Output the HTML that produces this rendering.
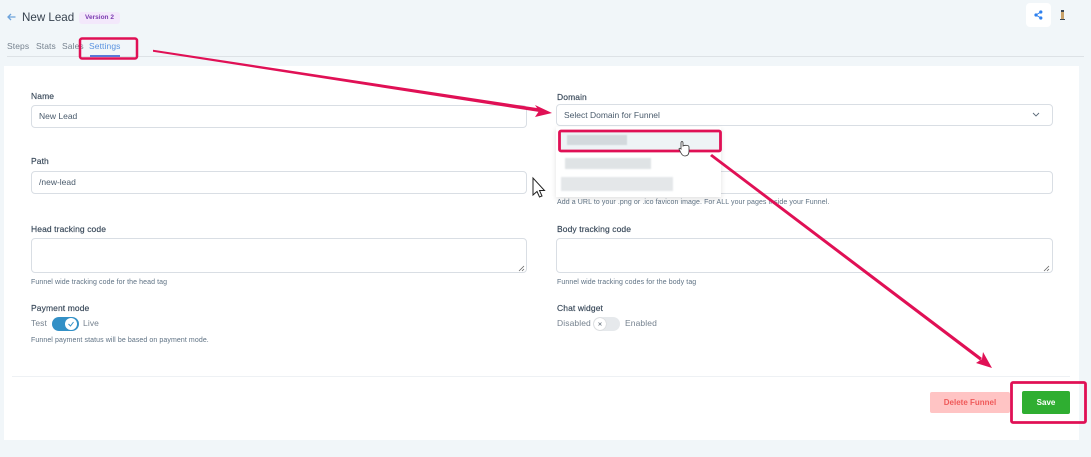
<!DOCTYPE html>
<html><head><meta charset="utf-8">
<style>
html,body{margin:0;padding:0}
body{width:1091px;height:457px;background:#f1f6f9;position:relative;overflow:hidden;font-family:"Liberation Sans",sans-serif;color:#2f3f52}
.a{position:absolute;white-space:nowrap}
.lb{font-size:8.5px;line-height:11px;color:#374758;font-weight:400;-webkit-text-stroke:.15px #374758;letter-spacing:.1px}
.in{position:absolute;box-sizing:border-box;background:#fff;border:1px solid #d9dee4;border-radius:4px;font-size:8.5px;color:#4a5b6c;padding-left:7px}
.hp{font-size:7px;line-height:9px;color:#5f7284;letter-spacing:.09px}
.t{font-size:8.5px;line-height:11px;color:#76828f;letter-spacing:.1px}
</style></head><body>
<div class="a" style="left:4px;top:66px;width:1075px;height:374px;background:#fff"></div>
<div class="a" style="left:7px;top:56px;width:1077px;height:1px;background:#dde2e6"></div>

<svg class="a" style="left:6px;top:12px" width="11" height="10" viewBox="0 0 11 10"><path d="M9.5 5H2M5 2L2 5l3 3" fill="none" stroke="#6da3dc" stroke-width="1.3"/></svg>
<div class="a" style="left:22px;top:10px;font-size:11.600px;line-height:16px;color:#37424f">New Lead</div>
<div class="a" style="left:79px;top:12px;width:41px;height:12px;background:#f3e8fb;border-radius:3px;font-size:6.500px;line-height:12px;text-align:center;color:#7b3bb0;font-weight:bold">Version 2</div>

<div class="a t" style="left:7px;top:41px">Steps</div>
<div class="a t" style="left:36px;top:41px">Stats</div>
<div class="a t" style="left:62px;top:41px">Sales</div>
<div class="a" style="left:89px;top:41px;font-size:8.500px;line-height:11px;color:#5b93e0;letter-spacing:.1px">Settings</div>
<div class="a" style="left:90px;top:55px;width:30px;height:2px;background:#5a78d8"></div>

<div class="a" style="left:1026px;top:3px;width:25px;height:24px;background:#fff;border-radius:4px"></div>
<svg class="a" style="left:1034px;top:10px" width="9" height="10" viewBox="0 0 9 10"><path d="M6.800 2L2 5l4.800 3" fill="none" stroke="#2d80ee" stroke-width="1"/><circle cx="6.800" cy="2" r="1.600" fill="#2d80ee"/><circle cx="2" cy="5" r="1.600" fill="#2d80ee"/><circle cx="6.800" cy="8" r="1.600" fill="#2d80ee"/></svg>
<div class="a" style="left:1061px;top:12px;width:3px;height:7px;background:#c9a26a"></div>
<div class="a" style="left:1061px;top:10px;width:3px;height:2px;background:#3a4654"></div>
<div class="a" style="left:1060px;top:19px;width:5px;height:1px;background:#3a4654"></div>

<div class="a lb" style="left:31px;top:91px">Name</div>
<div class="in" style="left:31px;top:105px;width:496px;height:23px;line-height:21px">New Lead</div>
<div class="a lb" style="left:557px;top:92px">Domain</div>
<div class="in" style="left:556px;top:104px;width:497px;height:22px;line-height:20px">Select Domain for Funnel</div>
<svg class="a" style="left:1032px;top:112px" width="8" height="5" viewBox="0 0 8 5"><path d="M1 1l3 3 3-3" fill="none" stroke="#5c6b7a" stroke-width=".9"/></svg>

<div class="a lb" style="left:31px;top:156px">Path</div>
<div class="in" style="left:31px;top:171px;width:496px;height:23px;line-height:21px">/new-lead</div>
<div class="in" style="left:556px;top:171px;width:497px;height:23px"></div>
<div class="a hp" style="left:557px;top:198px">Add a URL to your .png or .ico favicon image. For ALL your pages inside your Funnel.</div>

<div class="a" style="left:556px;top:127px;width:165px;height:70px;background:#fff;box-shadow:0 2px 5px rgba(0,0,0,.12)"></div>
<div class="a" style="left:559px;top:131px;width:162px;height:20px;background:#eef3f6"></div>
<div class="a" style="left:567px;top:135px;width:60px;height:10px;background:#d3d9dd;filter:blur(.6px)"></div>
<div class="a" style="left:565px;top:158px;width:86px;height:11px;background:#dfe3e5;filter:blur(.8px)"></div>
<div class="a" style="left:561px;top:177px;width:112px;height:14px;background:#e4e7e9;filter:blur(.8px)"></div>

<div class="a lb" style="left:31px;top:224px">Head tracking code</div>
<div class="in" style="left:31px;top:238px;width:496px;height:35px"></div>
<div class="a hp" style="left:31px;top:278px">Funnel wide tracking code for the head tag</div>
<div class="a lb" style="left:557px;top:224px">Body tracking code</div>
<div class="in" style="left:556px;top:238px;width:497px;height:35px"></div>
<div class="a hp" style="left:557px;top:278px">Funnel wide tracking codes for the body tag</div>
<svg class="a" style="left:518px;top:265px" width="7" height="7"><path d="M1 6L6 1M4 6L6 4" stroke="#666" stroke-width=".8"/></svg>
<svg class="a" style="left:1043px;top:265px" width="7" height="7"><path d="M1 6L6 1M4 6L6 4" stroke="#666" stroke-width=".8"/></svg>

<div class="a lb" style="left:31px;top:303px">Payment mode</div>
<div class="a t" style="left:31px;top:318px">Test</div>
<div class="a" style="left:52px;top:317px;width:27px;height:14px;background:#3390c6;border-radius:7px"></div>
<div class="a" style="left:65px;top:318px;width:12px;height:12px;background:#fff;border-radius:50%"></div>
<svg class="a" style="left:67px;top:320px" width="8" height="8"><path d="M1.500 4l2 2 3-4" fill="none" stroke="#3390c6" stroke-width="1"/></svg>
<div class="a t" style="left:83px;top:318px">Live</div>
<div class="a hp" style="left:31px;top:336px">Funnel payment status will be based on payment mode.</div>

<div class="a lb" style="left:557px;top:303px">Chat widget</div>
<div class="a t" style="left:557px;top:318px">Disabled</div>
<div class="a" style="left:593px;top:317px;width:27px;height:14px;background:#e6e9ec;border-radius:7px"></div>
<div class="a" style="left:594px;top:318px;width:12px;height:12px;background:#fff;border-radius:50%;box-shadow:0 0 1px #aaa"></div>
<svg class="a" style="left:598px;top:322px" width="4" height="4"><path d="M.5.5l3 3M3.500.5l-3 3" stroke="#66727e" stroke-width=".7"/></svg>
<div class="a t" style="left:625px;top:318px">Enabled</div>

<div class="a" style="left:12px;top:376px;width:1058px;height:1px;background:#eef1f4"></div>
<div class="a" style="left:930px;top:392px;width:80px;height:21px;background:#ffc4c4;border-radius:2px;font-size:8px;line-height:21px;text-align:center;color:#ef5a5a;font-weight:bold">Delete Funnel</div>
<div class="a" style="left:1022px;top:391px;width:48px;height:23px;background:#2fae31;border-radius:2px;font-size:8px;line-height:23px;text-align:center;color:#fff;font-weight:bold">Save</div>

<svg class="a" style="left:0;top:0" width="1091" height="457" viewBox="0 0 1091 457">
<g fill="none" stroke="#e01055" stroke-linejoin="round">
<rect x="80" y="38.500" width="57" height="20" rx="2" stroke-width="2.500"/>
<rect x="559.500" y="131" width="161" height="20" rx="1.500" stroke-width="2.800"/>
<rect x="1011.500" y="382.500" width="74" height="40" rx="1.500" stroke-width="2.800"/>
</g>
<path d="M153 49.800L540 108.500L539.500 112L153 51.800Z" fill="#e01055"/>
<path d="M712 154L982 358L980 360.500L710 156Z" fill="#e01055"/>
<path d="M552 113L535 105L539 111L535 117Z" fill="#e01055"/>
<path d="M992 368L976 363L982 359L983 352Z" fill="#e01055"/>
<path d="M533 178v17l4-3.500 2.500 5.500 2.500-1-2.500-5.500 5 0Z" fill="#fff" stroke="#222" stroke-width="1"/>
<path d="M681 143c0-2 2-2 2 0v3c2-1 6-1 6 1v4c0 3-1 5-4 5-2 0-3-1-4-3l-2-4c0-1 1-1 2 0Z" fill="#fff" stroke="#333" stroke-width=".8"/>
</svg>
</body></html>
